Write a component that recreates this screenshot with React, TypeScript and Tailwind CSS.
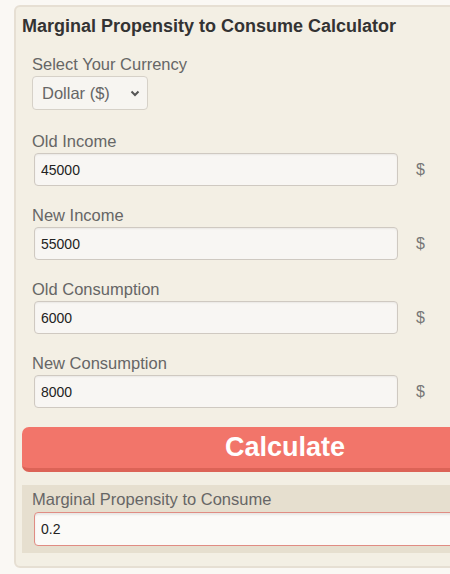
import React, { useState } from 'react';

const fields = [
  { key: 'oldIncome', label: 'Old Income', value: '45000' },
  { key: 'newIncome', label: 'New Income', value: '55000' },
  { key: 'oldCons', label: 'Old Consumption', value: '6000' },
  { key: 'newCons', label: 'New Consumption', value: '8000' },
];

const App: React.FC = () => {
  const [values, setValues] = useState<Record<string, string>>(
    Object.fromEntries(fields.map(f => [f.key, f.value]))
  );
  const [result, setResult] = useState('0.2');

  const calculate = () => {
    const dI = parseFloat(values.newIncome) - parseFloat(values.oldIncome);
    const dC = parseFloat(values.newCons) - parseFloat(values.oldCons);
    if (dI) setResult(String(Math.round((dC / dI) * 1000) / 1000));
  };

  return (
    <div className="w-[450px] h-[574px] overflow-hidden bg-[#faf8f4] font-['Liberation_Sans',Arial,sans-serif]">
      <div className="ml-[14px] mt-[5px] w-[542px] h-[563px] bg-[#f3efe4] border-2 border-[#e6dfd3] rounded-md px-[6px]">
        <h1 className="mt-[9px] h-[20px] leading-[20px] text-[18px] font-bold text-[#333]">
          Marginal Propensity to Consume Calculator
        </h1>

        <div className="mt-[18px] pl-[10px]">
          <div className="h-[20px] leading-[20px] text-[16.5px] text-[#666]">Select Your Currency</div>
          <div className="mt-[2px] w-[116px] h-[34px] border border-[#d6d1c8] rounded-[4px] bg-[#f7f5f1] flex items-center justify-between pl-[9px] pr-[7px] text-[16.5px] text-[#666]">
            <span>Dollar ($)</span>
            <svg width="10" height="10" viewBox="0 0 10 10" fill="none" stroke="#555" strokeWidth="2">
              <path d="M1.5 3.5 L5 7 L8.5 3.5" />
            </svg>
          </div>
        </div>

        {fields.map((f, i) => (
          <div key={f.key} className={`pl-[10px] ${i === 0 ? 'mt-[21px]' : 'mt-[19px]'}`}>
            <div className="h-[20px] leading-[20px] text-[16.5px] text-[#666]">{f.label}</div>
            <div className="mt-[2px] flex items-center">
              <input
                value={values[f.key]}
                onChange={e => setValues({ ...values, [f.key]: e.target.value })}
                className="ml-[2px] w-[364px] h-[33px] px-[6px] text-[14px] text-[#222] bg-[#f8f6f3] border border-[#cfc9c1] rounded-[4px] shadow-[inset_0_1px_2px_rgba(0,0,0,0.06)] outline-none"
              />
              <span className="ml-[18px] text-[16px] text-[#777]">$</span>
            </div>
          </div>
        ))}

        <button
          onClick={calculate}
          className="mt-[19px] w-full h-[45px] bg-[#f2756a] border-b-[4px] border-[#dc6357] rounded-[7px] text-white text-[27px] font-bold leading-none"
        >
          Calculate
        </button>

        <div className="mt-[13px] h-[68px] bg-[#e6dfcf] pt-[4px] pl-[10px]">
          <div className="h-[20px] leading-[20px] text-[16.5px] text-[#666]">Marginal Propensity to Consume</div>
          <input
            value={result}
            readOnly
            className="mt-[3px] ml-[2px] w-[500px] h-[34px] px-[6px] text-[14px] text-[#222] bg-[#fbfaf8] border border-[#e08c83] rounded-[4px] shadow-[inset_0_2px_2px_rgba(0,0,0,0.08)] outline-none"
          />
        </div>
      </div>
    </div>
  );
};

export default App;
